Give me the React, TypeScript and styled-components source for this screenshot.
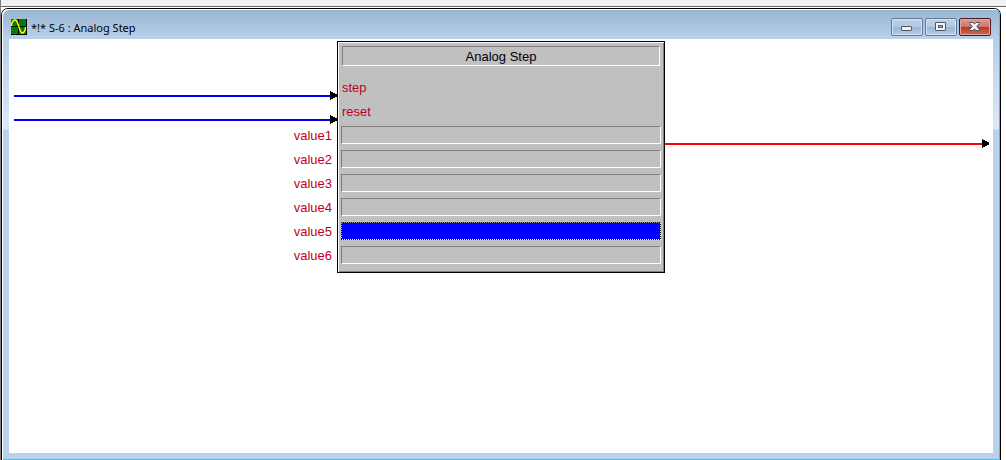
import React from "react";
import styled, { createGlobalStyle, css } from "styled-components";

const GlobalStyle = createGlobalStyle`
  *, *::before, *::after { box-sizing: border-box; }
  body { margin: 0; background: #ffffff; }
`;

const Desktop = styled.div`
  display: flex;
  flex-direction: column;
  min-height: 100vh;
  padding-right: 5px;
  border-left: 1px solid #808080;
  background: linear-gradient(#f0f0f0 6px, #696969 6px 7px, #ffffff 7px);
`;

const Frame = styled.section`
  flex: 1;
  display: flex;
  flex-direction: column;
  margin-top: 8px;
  padding: 0 7px 7px 7px;
  border: solid #000000;
  border-width: 1px 1px 0 1px;
  border-radius: 7px 7px 0 0;
  box-shadow: inset 1px 1px 0 #ffffff, inset -1px -1px 0 #3cc8dc;
  background: linear-gradient(#98b4d2 0, #b7cfe9 30px, #dce9f7 120px, #b9d1ea 121px);
`;

const TitleBar = styled.header`
  display: flex;
  align-items: center;
  height: 30px;
  margin: 0 -7px;
  padding: 6px 9px 0 9px;
  border-radius: 6px 6px 0 0;
  background: linear-gradient(#98b4d2, #b9d1ea);
  box-shadow: inset 1px 1px 0 #ffffff, inset -1px 0 0 #3cc8dc;
`;

const Title = styled.h1`
  flex: 1;
  margin: 0 0 0 4px;
  padding-top: 2px;
  font: 400 11px/16px "Noto Sans", "Open Sans", sans-serif;
  color: #000000;
`;

const Controls = styled.div`
  display: flex;
  gap: 2px;
`;

const CaptionButton = styled.button<{ $close?: boolean }>`
  display: flex;
  align-items: center;
  justify-content: center;
  width: 32px;
  height: 18px;
  padding: 0;
  border: 1px solid ${(p) => (p.$close ? "#4c1626" : "#64799a")};
  border-radius: 2px;
  box-shadow: inset 0 0 0 1px ${(p) => (p.$close ? "#e3a79f" : "#d3e2f2")};
  background: ${(p) =>
    p.$close
      ? "linear-gradient(#dc9b91 0, #cf7568 8px, #b93420 8px, #d16d52 100%)"
      : "linear-gradient(#bfd2e7 0, #b0c8e2 8px, #98b4d2 8px, #b5cee7 100%)"};
`;

const Canvas = styled.main`
  flex: 1;
  display: grid;
  grid-template-columns: repeat(3, 1fr);
  align-items: start;
  padding-top: 2px;
  background: #ffffff;
`;

const Inputs = styled.div`
  display: flex;
  flex-direction: column;
  padding: 50px 0 0 5px;
`;

const Wire = styled.div<{ $color: string }>`
  display: flex;
  height: 9px;
  &::before {
    content: "";
    flex: 1;
    height: 2px;
    margin-top: 4px;
    background: ${(p) => p.$color};
  }
  & + & { margin-top: 15px; }
`;

const Output = styled.div`
  padding: 98px 4px 0 0;
`;

const text = css`
  font-family: "Liberation Sans", Arial, sans-serif;
  font-size: 13px;
`;

const FieldLabel = styled.label`
  ${text}
  height: 24px;
  padding-right: 5px;
  line-height: 24px;
  text-align: right;
  color: #c00020;
`;

const Block = styled.div`
  display: flex;
  flex-direction: column;
  padding: 3px 2px 8px 2px;
  border: 1px solid #000000;
  box-shadow: inset 1px 1px 0 #ffffff, inset -1px -1px 0 #808080;
  background: #c0c0c0;
`;

const sunken = css`
  border: 1px solid;
  border-color: #808080 #ffffff #ffffff #808080;
  background: #c0c0c0;
`;

const BlockTitle = styled.h2`
  ${text}
  ${sunken}
  height: 20px;
  margin: 1px 2px 10px 2px;
  font-weight: 400;
  line-height: 20px;
  text-align: center;
  color: #000000;
`;

const Port = styled.div`
  ${text}
  height: 24px;
  padding-left: 2px;
  line-height: 24px;
  color: #c00020;
`;

const Fields = styled.div`
  display: flex;
  flex-direction: column;
  gap: 6px;
  padding: 2px 1px 0 1px;
`;

const dots = (angle: string, other: string) =>
  `repeating-linear-gradient(${angle}, #000000 0 1px, ${other} 1px 2px)`;

const Field = styled.input<{ $selected?: boolean }>`
  ${text}
  ${sunken}
  width: 100%;
  height: 18px;
  padding: 0 3px;
  border-radius: 0;
  outline: none;
  ${(p) =>
    p.$selected &&
    css`
      border: 0;
      color: #ffffff;
      background:
        ${dots("90deg", "#a0a0a0")} top / 100% 1px no-repeat,
        ${dots("90deg", "#ffffff")} bottom / 100% 1px no-repeat,
        ${dots("180deg", "#a0a0a0")} left / 1px 100% no-repeat,
        ${dots("180deg", "#ffffff")} right / 1px 100% no-repeat,
        #0000ff;
    `}
`;

const Arrow = () => (
  <svg width="7" height="9" viewBox="0 0 7 9" shapeRendering="crispEdges" aria-hidden="true">
    <path d="M0 0H1V1H3V2H5V3H7V6H5V7H3V8H1V9H0Z" />
  </svg>
);

const WaveIcon = () => (
  <svg width="16" height="16" viewBox="0 0 16 16" aria-hidden="true">
    <path fill="#000" d="M0 0H16V16H0Z" />
    <path fill="#008000" d="M0 0H7V7H0ZM8 0H15V7H8ZM0 8H7V15H0ZM8 8H15V15H8Z" />
    <path
      fill="none"
      stroke="#ffff00"
      strokeWidth="1.4"
      d="M.7 7V4.5L2 2.3L3.5 1H4.5L6 2.5L7 5L8.3 9L9.3 12L10.8 14H12L13.4 12.5L14.4 10V8"
    />
  </svg>
);

const MinimizeIcon = () => (
  <svg width="12" height="12" viewBox="0 0 12 12" aria-hidden="true">
    <rect x=".5" y="5.5" width="10" height="4" rx=".5" fill="#f4f4f4" stroke="#535666" />
  </svg>
);

const MaximizeIcon = () => (
  <svg width="12" height="12" viewBox="0 0 12 12" aria-hidden="true">
    <rect x=".5" y="1.5" width="10" height="8" rx=".5" fill="#f4f4f4" stroke="#535666" />
    <rect x="3.5" y="4.5" width="4" height="2" fill="#98b4d2" stroke="#535666" />
  </svg>
);

const CloseIcon = () => (
  <svg width="12" height="12" viewBox="0 0 12 12" aria-hidden="true">
    <path
      fill="#f4f4f4"
      stroke="#535666"
      strokeLinejoin="round"
      d="M.6 1.5H4L5.5 3.1L7 1.5H10.4V2.4L7.8 5.5L10.4 8.6V9.5H7L5.5 7.9L4 9.5H.6V8.6L3.2 5.5L.6 2.4Z"
    />
  </svg>
);

const ports = ["step", "reset"];
const values = ["value1", "value2", "value3", "value4", "value5", "value6"];
const selected = "value5";

export default function App() {
  return (
    <>
      <GlobalStyle />
      <Desktop>
        <Frame>
          <TitleBar>
            <WaveIcon />
            <Title>*!* S-6 : Analog Step</Title>
            <Controls>
              <CaptionButton type="button" aria-label="Minimize">
                <MinimizeIcon />
              </CaptionButton>
              <CaptionButton type="button" aria-label="Maximize">
                <MaximizeIcon />
              </CaptionButton>
              <CaptionButton type="button" aria-label="Close" $close>
                <CloseIcon />
              </CaptionButton>
            </Controls>
          </TitleBar>
          <Canvas>
            <Inputs>
              {ports.map((name) => (
                <Wire key={name} $color="#0000ff">
                  <Arrow />
                </Wire>
              ))}
              {values.map((name) => (
                <FieldLabel key={name} htmlFor={name}>
                  {name}
                </FieldLabel>
              ))}
            </Inputs>
            <Block>
              <BlockTitle>Analog Step</BlockTitle>
              {ports.map((name) => (
                <Port key={name}>{name}</Port>
              ))}
              <Fields>
                {values.map((name) => (
                  <Field key={name} id={name} type="text" $selected={name === selected} />
                ))}
              </Fields>
            </Block>
            <Output>
              <Wire $color="#ff0000">
                <Arrow />
              </Wire>
            </Output>
          </Canvas>
        </Frame>
      </Desktop>
    </>
  );
}
